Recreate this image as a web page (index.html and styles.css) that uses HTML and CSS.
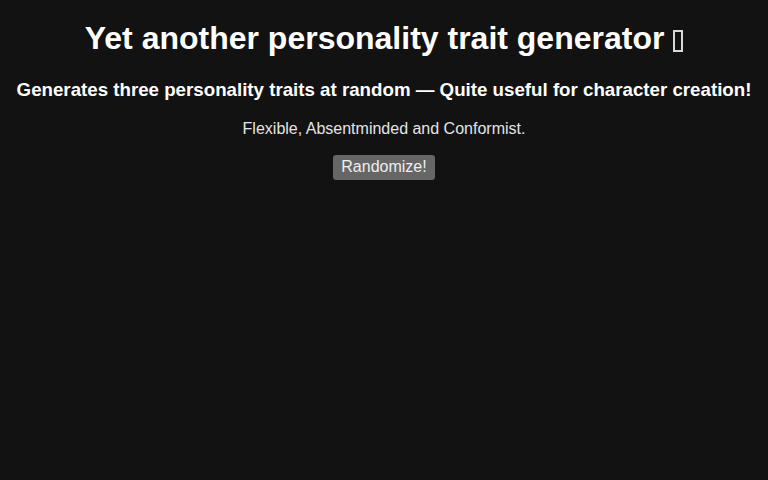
FILE: index.html
```html
<!DOCTYPE html>
<html lang="en">
  <head>
    <meta charset="UTF-8" />
    <meta name="viewport" content="width=device-width, initial-scale=1.0" />
    <title>Personality Trait Generator</title>
    <link rel="stylesheet" href="styles.css">
  </head>
  <body>
    <h1>Yet another personality trait generator <span class="glyph"></span></h1>
    <h3>Generates three personality traits at random — Quite useful for character creation!</h3>
    <p id="traits">Flexible, Absentminded and Conformist.</p>
    <button type="button" id="randomize">Randomize!</button>
  </body>
</html>
```

FILE: styles.css
```css
body {
    font-family: "Liberation Sans", Arial, sans-serif;
    background: #121212;
    color: #fff;
    text-align: center;
    margin: 0;
    padding: 0 8px;
}
h1 {
    margin: 20px 0 22px;
}
/* missing-glyph box after the title */
.glyph {
    display: inline-block;
    width: 6px;
    height: 18px;
    border: 2px solid #d8d8d8;
    vertical-align: -3px;
}
h3 {
    font-size: 1.17em;
}
p {
    color: #e4e4e4;
    margin-bottom: 17px;
}
button {
    font-family: "Liberation Sans", Arial, sans-serif;
    font-size: 16px;
    background-color: #666;
    color: #eee;
    border: none;
    border-radius: 3px;
    padding: 3px 8px 4px;
    cursor: pointer;
}
button:hover {
    opacity: 0.9;
}
```
